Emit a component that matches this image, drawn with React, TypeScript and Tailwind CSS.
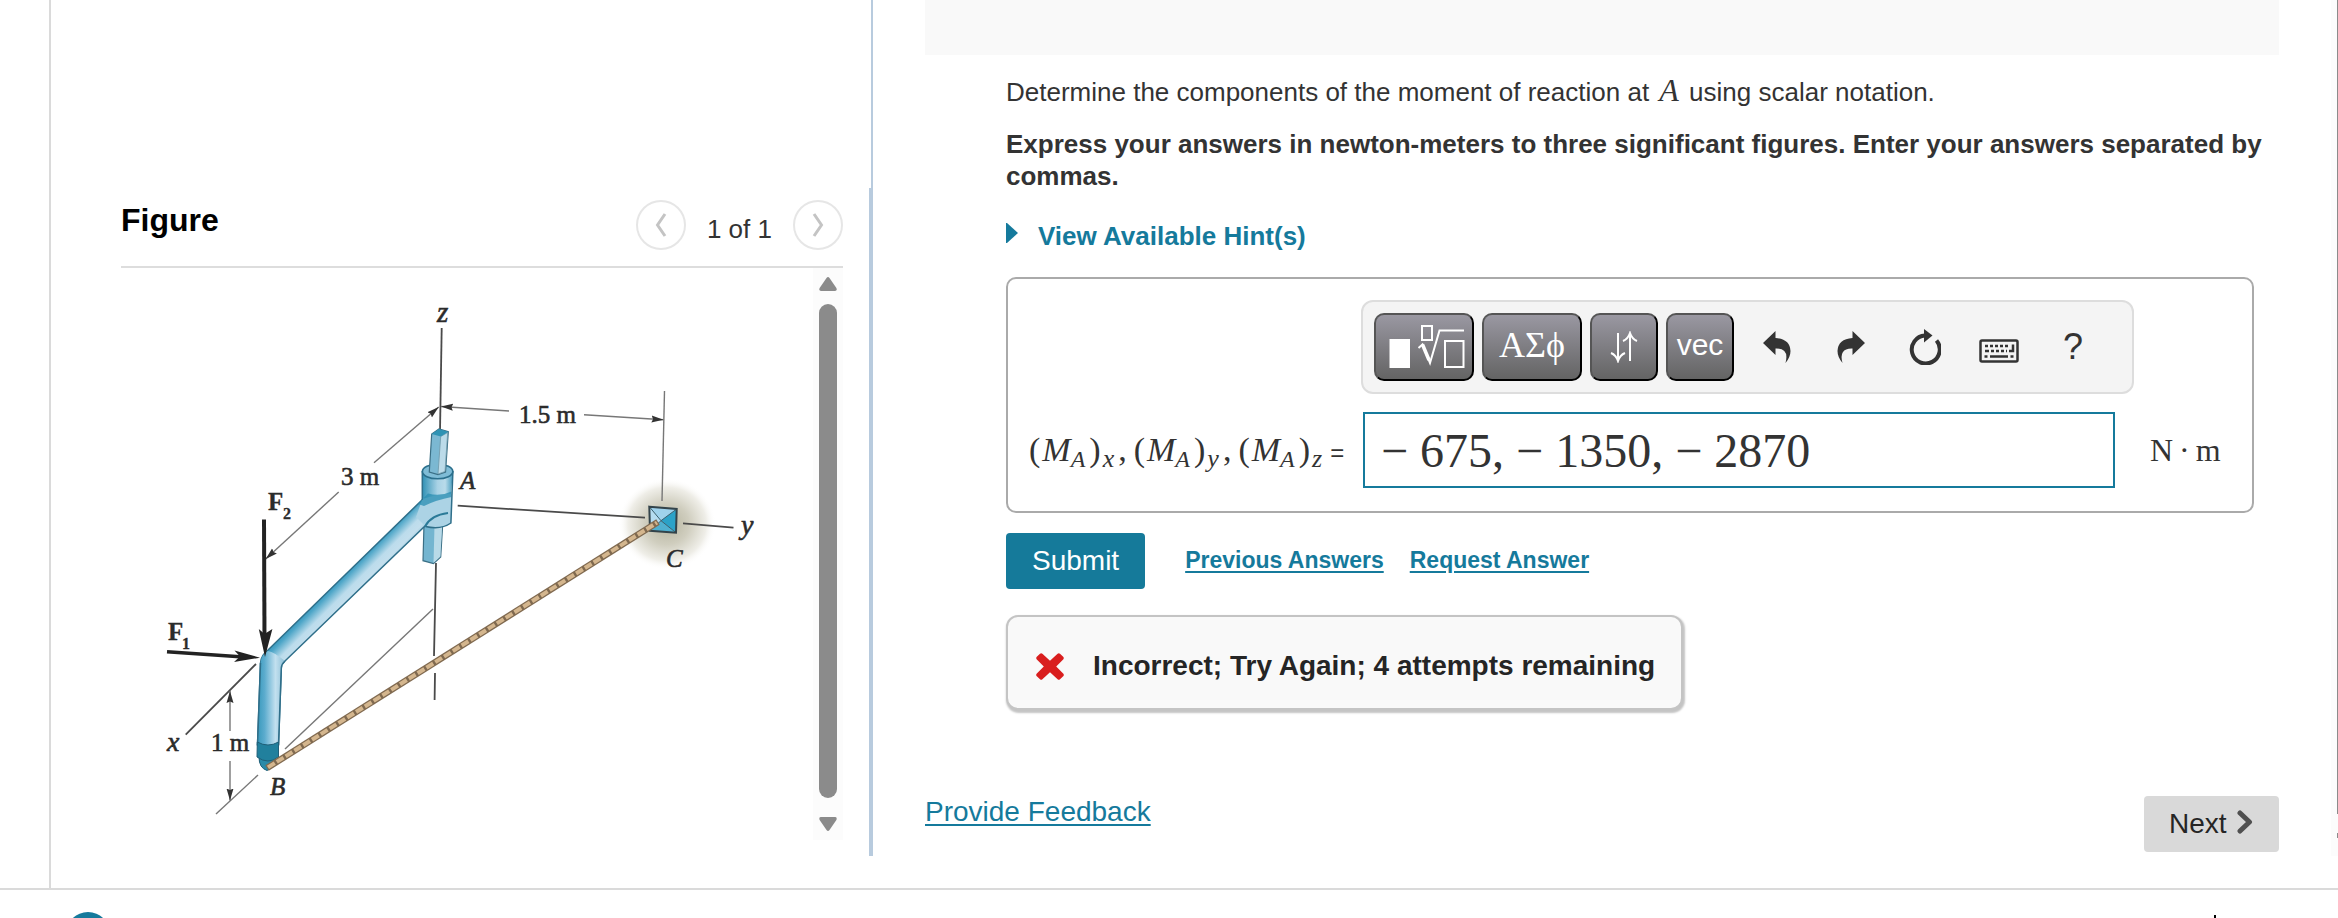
import type { ReactNode } from "react";

const SANS = "font-['Liberation_Sans',Arial,sans-serif]";
const SERIF = "font-['Liberation_Serif','Times_New_Roman',serif]";

function BracketDrawing() {
  return (
    <svg viewBox="121 268 692 572" className="block h-[572px] w-[692px] max-w-full" role="img" aria-label="Bracket supported at A with cable BC">
      <defs>
        <linearGradient id="arm" gradientUnits="userSpaceOnUse" x1="339" y1="577" x2="357" y2="595">
          <stop offset="0" stopColor="#2f93b8" />
          <stop offset="0.2" stopColor="#4ea6c8" />
          <stop offset="0.6" stopColor="#bcdcec" />
          <stop offset="0.85" stopColor="#c3dfed" />
          <stop offset="1" stopColor="#a5cde0" />
        </linearGradient>
        <linearGradient id="leg" x1="0" y1="0" x2="1" y2="0">
          <stop offset="0" stopColor="#3a9abd" />
          <stop offset="0.25" stopColor="#5cacce" />
          <stop offset="0.65" stopColor="#c2e0ef" />
          <stop offset="1" stopColor="#8cbfd6" />
        </linearGradient>
        <linearGradient id="collar" x1="0" y1="0" x2="1" y2="0">
          <stop offset="0" stopColor="#3292b6" />
          <stop offset="0.5" stopColor="#a9d2e5" />
          <stop offset="0.75" stopColor="#b9dbea" />
          <stop offset="1" stopColor="#4a9fc0" />
        </linearGradient>
        <radialGradient id="wall">
          <stop offset="0" stopColor="#b5b39d" />
          <stop offset="0.45" stopColor="#d0cebf" />
          <stop offset="0.8" stopColor="#efeee8" />
          <stop offset="1" stopColor="#ffffff" stopOpacity="0" />
        </radialGradient>
        <marker id="tip" viewBox="0 0 12 8" refX="12" refY="4" markerWidth="12" markerHeight="8" markerUnits="userSpaceOnUse" orient="auto">
          <path d="M0 0.5 L12 4 L0 7.5 L1.5 4 Z" fill="#333" />
        </marker>
      </defs>

      <ellipse cx="667" cy="524" rx="49" ry="46" fill="url(#wall)" />

      {/* Axes and reference lines */}
      <g fill="none" stroke="#4a4a4a" strokeWidth="1.8">
        <path d="M441.7 328 L440 432" />
        <path d="M436 563 L434 656 M435 673 L434.6 700" />
        <path d="M457.7 505.7 L645 517.7 M683 523.3 L733.5 527.7" />
        <path d="M256 664 L185.7 734.7" />
      </g>
      <g fill="none" stroke="#777" strokeWidth="1.4">
        <path d="M664.5 391 L662 501" />
        <path d="M433 609 L285 749" />
        <path d="M258 775 L216 814" />
        <path d="M374 462.7 L438.7 407" markerEnd="url(#tip)" />
        <path d="M338.7 492 L265.7 559" markerEnd="url(#tip)" />
        <path d="M509 411 L441 406.5" markerEnd="url(#tip)" />
        <path d="M584 414.7 L663.5 419.8" markerEnd="url(#tip)" />
        <path d="M230 731 L230 691" markerEnd="url(#tip)" />
        <path d="M230 761 L230 800.5" markerEnd="url(#tip)" />
      </g>

      {/* Square rod below the collar */}
      <path d="M424 524 L423 560.7 L433.5 563.5 L440.7 557 L442.7 524 Z" fill="#74b5d0" stroke="#3b6f85" strokeWidth="1.2" />
      <path d="M434.5 526 L433.5 563 L440.4 556.6 L442.2 526 Z" fill="#b9dae8" />

      {/* Arm and leg */}
      <path d="M422 500 L268 650 Q261 655 260.5 663 L257.5 745 L278.5 745 L281.3 668 Q281.5 664 285 661 L425 526 L440 508 Z" fill="url(#arm)" stroke="#2f6f8a" strokeWidth="1.5" />
      <path d="M260.8 661 L257.8 747 L278.3 747 L281 668 Q281.5 664 285 661 Q274 652 268 651 Q262 654 260.8 661 Z" fill="url(#leg)" />
      <path d="M260.5 663 L257.5 745 M278.5 745 L281.3 668 Q281.5 664 285 661" fill="none" stroke="#2f6f8a" strokeWidth="1.5" />
      <path d="M259 757 Q259 768 267 770.5 Q274 768 276 757 Z" fill="#2b8aa8" stroke="#1f5f78" />
      <path d="M257.3 742 Q268 748 278.5 742 L278.5 757 Q268 765 257 757 Z" fill="#21809d" stroke="#1f5f78" />

      {/* Collar at A, blending into the arm */}
      <path d="M422.5 471 L422.5 501 L440 499 L451 497 L452.7 471 Z" fill="url(#collar)" />
      <path d="M422.5 499 Q438 494 452 494 L451 523 Q441 530 425.5 526.5 L416 517 Z" fill="#acd3e5" />
      <path d="M428 493.5 Q440 497 451.5 491.5 L451.5 497 Q436 500 424 506 L418 504 Z" fill="#2a8db2" opacity="0.75" />
      <path d="M425 526.5 Q431 515 448 513" fill="none" stroke="#2b7a98" strokeWidth="2" />
      <path d="M422.3 471 L422.3 500 M452.9 471 L450.9 523 Q441 530 425.5 526.5" fill="none" stroke="#2f6f8a" strokeWidth="1.5" />
      <ellipse cx="437.6" cy="471.5" rx="15.2" ry="7.3" fill="#7fbcd6" stroke="#2b6f8c" strokeWidth="1.6" />

      {/* Square rod above the collar */}
      <path d="M431.7 434 L429.3 472 L438 474.5 L445.5 472 L448.3 431.7 L439 429 Z" fill="#7bb8d2" stroke="#3b6f85" strokeWidth="1.2" />
      <path d="M440.7 436.5 L438 474 L445 471.5 L447.7 432.5 Z" fill="#bcdbe9" stroke="#6f98a8" strokeWidth="0.8" />
      <path d="M431.7 434 L439 429 L448.3 431.7 L440.7 436.5 Z" fill="#2f93b4" />

      {/* Anchor plate at C */}
      <path d="M649.3 506.7 L676.7 509 L661 520.7 Z" fill="#9fd2ec" />
      <path d="M676.7 509 L676 532.7 L661 520.7 Z" fill="#2ba2c8" />
      <path d="M676 532.7 L650 530.7 L661 520.7 Z" fill="#4fb0d0" />
      <path d="M650 530.7 L649.3 506.7 L661 520.7 Z" fill="#b5dcf0" />
      <path d="M649.3 506.7 L661 520.7 L676 532.7 M676.7 509 L661 520.7 L650 530.7" fill="none" stroke="#3a6070" strokeWidth="1" />
      <path d="M649.3 506.7 L676.7 509 L676 532.7 L650 530.7 Z" fill="none" stroke="#33434a" strokeWidth="2" />

      {/* Cable */}
      <path d="M267 768 L658 522" stroke="#806a50" strokeWidth="6.5" />
      <path d="M268 767.4 L657 522.6" stroke="#d4b68e" strokeWidth="4" strokeDasharray="8 2.4" />

      {/* Forces */}
      <path d="M264 519.5 L264.5 638" stroke="#222" strokeWidth="4" />
      <path d="M265 657 L258.8 629 L264.5 634 L272.4 629 Z" fill="#222" />
      <path d="M167 651.8 L240 656.7" stroke="#222" strokeWidth="3.6" />
      <path d="M260 657.7 L234.5 650.5 L240 656.5 L234 662 Z" fill="#222" />

      <g className={SERIF} fontSize="25" fill="#2b2b2b" stroke="#2b2b2b" strokeWidth="0.6">
        <text x="341" y="485">3 m</text>
        <text x="519" y="423">1.5 m</text>
        <text x="211" y="751">1 m</text>
        <g fontStyle="italic">
          <text x="437" y="322" fontSize="29">z</text>
          <text x="460" y="489">A</text>
          <text x="741" y="534" fontSize="28">y</text>
          <text x="666" y="567">C</text>
          <text x="270" y="795">B</text>
          <text x="167" y="751" fontSize="28">x</text>
        </g>
        <g fontWeight="bold" strokeWidth="0.3">
          <text x="268" y="510">F</text>
          <text x="283" y="519" fontSize="16">2</text>
          <text x="168" y="640">F</text>
          <text x="182" y="649" fontSize="16">1</text>
        </g>
      </g>
    </svg>
  );
}

function FigureScrollbar() {
  return (
    <div className="flex w-[30px] shrink-0 flex-col items-center justify-between bg-[#fcfcfc] py-[9px]">
      <svg width="18" height="14" viewBox="0 0 18 14" fill="#8b8b8b">
        <path d="M7.5 1 Q9 -0.8 10.5 1 L17.4 11 Q18.4 14 16 14 L2 14 Q-0.4 14 0.6 11 Z" />
      </svg>
      <div className="my-[13px] w-[18px] flex-1 rounded-full bg-[#8b8b8b]" />
      <svg width="18" height="14" viewBox="0 0 18 14" fill="#8b8b8b" className="mt-[6px]">
        <path d="M7.5 13 Q9 14.8 10.5 13 L17.4 3 Q18.4 0 16 0 L2 0 Q-0.4 0 0.6 3 Z" />
      </svg>
    </div>
  );
}

function PagerButton({ label, d }: { label: string; d: string }) {
  return (
    <button type="button" aria-label={label} className="flex size-[50px] items-center justify-center rounded-full border-2 border-[#e6e6e6]">
      <svg width="14" height="24" viewBox="0 0 14 24" fill="none" stroke="#c4c4c4" strokeWidth="3">
        <path d={d} />
      </svg>
    </button>
  );
}

function KeyButton({ label, wide, children }: { label: string; wide?: boolean; children: ReactNode }) {
  return (
    <button
      type="button"
      aria-label={label}
      className={`flex h-[68px] items-center justify-center rounded-[10px] border-2 border-t-[#555] border-r-black border-b-black border-l-[#555] bg-linear-to-b from-[#9a98a2] to-[#646464] text-white ${wide ? "w-[100px]" : "w-[68px]"}`}
    >
      {children}
    </button>
  );
}

function ToolButton({ label, children }: { label: string; children: ReactNode }) {
  return (
    <button type="button" aria-label={label} className="flex h-[68px] w-[74px] items-center justify-center text-[#333]">
      {children}
    </button>
  );
}

function MathToolbar() {
  return (
    <div className="ml-[353px] flex w-fit items-center rounded-[12px] border-2 border-[#ddd] bg-[#f4f4f4] py-[11px] pr-[22px] pl-[11px]">
      <div className="flex gap-2">
        <KeyButton label="Templates" wide>
          <svg width="96" height="64" viewBox="2 2 96 64" fill="none" stroke="#fff" strokeWidth="2">
            <rect x="15.5" y="26" width="20.500" height="29" fill="#fff" stroke="none" />
            <rect x="48" y="13" width="10" height="14" />
            <path d="M44.500 35 L48.500 31.500 L56 50 L65.500 17.500 H90" />
            <path d="M48.500 31.500 L55 47" strokeWidth="3.500" />
            <rect x="71" y="28" width="18.500" height="26" />
          </svg>
        </KeyButton>
        <KeyButton label="Greek symbols" wide>
          <span className={`${SERIF} pb-1 text-4xl`}>ΑΣϕ</span>
        </KeyButton>
        <KeyButton label="Arrows">
          <svg width="30" height="32" viewBox="0 0 30 32" fill="none" stroke="#fff" strokeWidth="2">
            <path d="M9 2 V29 M2 22 Q7 24 9 30 Q11 24 16 22" />
            <path d="M21 30 V3 M14 10 Q19 8 21 2 Q23 8 28 10" />
          </svg>
        </KeyButton>
        <KeyButton label="Vector">
          <span className="pb-1 text-3xl">vec</span>
        </KeyButton>
      </div>
      <div className="ml-[6px] flex">
        <ToolButton label="Undo">
          <svg width="28" height="32" viewBox="0 0 28 32" fill="currentColor">
            <path d="M0 12 L12.500 0 V7 Q27 8 27.500 20 Q27.500 26 22.500 32 Q26.500 17 12.500 17.500 V24 Z" />
          </svg>
        </ToolButton>
        <ToolButton label="Redo">
          <svg width="28" height="32" viewBox="0 0 28 32" fill="currentColor">
            <path d="M28 12 L15.500 0 V7 Q1 8 0.500 20 Q0.500 26 5.500 32 Q1.500 17 15.500 17.500 V24 Z" />
          </svg>
        </ToolButton>
        <ToolButton label="Reset">
          <svg width="32" height="36" viewBox="0 0 32 36" fill="none" stroke="currentColor" strokeWidth="4">
            <path d="M27.500 11.500 A14 14 0 1 1 16 6.500" />
            <path d="M15 0 L23.500 6.500 L15 13.500 Z" fill="currentColor" stroke="none" />
          </svg>
        </ToolButton>
        <ToolButton label="Keyboard">
          <svg width="40" height="24" viewBox="0 0 40 24" fill="none" stroke="currentColor" strokeWidth="2.500" className="mt-2">
            <rect x="1.500" y="1.500" width="37" height="21" rx="1.500" />
            <path d="M6 7 H30" strokeDasharray="3 2" />
            <path d="M6 12 H28" strokeDasharray="4 2 3 2 3 2 3 2" />
            <path d="M34 5.500 V12 H30" />
            <path d="M5.500 17.500 H8.500 M11 17.500 H29 M31.500 17.500 H34.500" />
          </svg>
        </ToolButton>
        <ToolButton label="Help">
          <span className="text-4xl">?</span>
        </ToolButton>
      </div>
    </div>
  );
}

function Moment({ axis }: { axis: string }) {
  return (
    <span className="flex items-baseline">
      <span className="mr-[2px]">(</span>
      <i>M</i>
      <i className="relative top-[6px] mr-1 text-2xl leading-none">A</i>
      <span>)</span>
      <i className="relative top-[6px] ml-[2px] text-[26px] leading-none">{axis}</i>
    </span>
  );
}

function AnswerBox() {
  return (
    <div className="mt-[25px] mr-[25px] rounded-[10px] border-2 border-[#aaa] pt-[21px] pb-[23px]">
      <MathToolbar />
      <div className="mt-[18px] flex items-center">
        <label htmlFor="answer" className={`${SERIF} flex w-[355px] shrink-0 items-baseline pl-[21px] text-[34px] leading-10`}>
          <Moment axis="x" />
          <span className="mr-[7px] ml-1">,</span>
          <Moment axis="y" />
          <span className="mr-[7px] ml-1">,</span>
          <Moment axis="z" />
          <span className={`${SANS} ml-2 text-2xl leading-none`}>=</span>
        </label>
        <input
          id="answer"
          type="text"
          defaultValue="− 675, − 1350, − 2870"
          className={`${SERIF} h-[76px] min-w-0 flex-1 border-2 border-[#157a9c] bg-white px-4 text-5xl text-[#333] outline-none`}
        />
        <span className={`${SERIF} w-[137px] shrink-0 pl-[35px] text-[32px] leading-10`}>
          N<span className="px-[6px]">·</span>m
        </span>
      </div>
    </div>
  );
}

function FigurePanel() {
  return (
    <aside className="flex border-l-2 border-[#dadada]">
      <div className="min-w-0 flex-1 pt-[200px] pr-[26px] pb-4 pl-[70px]">
        <div className="flex items-start justify-between border-b-2 border-[#ddd] pb-4">
          <h2 className="text-[32px] leading-10 font-bold text-black">Figure</h2>
          <div className="flex items-center">
            <PagerButton label="Previous figure" d="M11 1 L3.500 12 L11 23" />
            <span className="mx-[21px] pt-2 text-[26px] leading-8">1 of 1</span>
            <PagerButton label="Next figure" d="M3 1 L10.500 12 L3 23" />
          </div>
        </div>
        <div className="flex justify-between">
          <BracketDrawing />
          <FigureScrollbar />
        </div>
      </div>
      <div className="mb-8 flex w-1 flex-col items-end">
        <div className="h-[188px] w-[2px] bg-[#b8cbde]" />
        <div className="w-1 flex-1 bg-[#b8cbde]" />
      </div>
    </aside>
  );
}

function QuestionPanel() {
  return (
    <main className="flex">
      <div className="min-w-0 flex-1 px-[52px] pb-9">
        <div className="h-[55px] bg-[#f9f9f9]" />
        <div className="pl-[81px]">
          <p className="mt-[21px] text-[26px] leading-8">
            Determine the components of the moment of reaction at <i className={`${SERIF} mx-[3px] text-[32px] leading-7`}>A</i> using scalar notation.
          </p>
          <p className="mt-5 text-[26px] leading-8 font-bold">
            Express your answers in newton-meters to three significant figures. Enter your answers separated by commas.
          </p>
          <button type="button" className="mt-7 flex items-start text-[26px] leading-8 font-bold text-[#157a9c]">
            <svg width="12" height="20" viewBox="0 0 12 20" fill="currentColor" className="mt-[3px] mr-5">
              <path d="M0 0 H1 L12 10 L1 20 H0 Z" />
            </svg>
            View Available Hint(s)
          </button>

          <AnswerBox />

          <div className="mt-5 flex items-center">
            <button type="button" className="h-14 rounded-[4px] bg-[#157a9a] px-[26px] pb-px text-[28px] text-white">
              Submit
            </button>
            <div className="ml-10 flex gap-[26px] pb-[2px] text-[23px] leading-7 font-bold text-[#157a9c]">
              <a href="#previous" className="underline decoration-2 underline-offset-[3px]">Previous Answers</a>
              <a href="#request" className="underline decoration-2 underline-offset-[3px]">Request Answer</a>
            </div>
          </div>

          <div className="mt-[26px] flex w-fit items-center rounded-[12px] border-2 border-[#c4c4c4] bg-[#f9f9f9] pt-[33px] pr-[26px] pb-[26px] pl-7 shadow-[1px_2px_2px_1px_#c4c4c4]">
            <svg width="28" height="27" viewBox="0 0 28 27" fill="#d91e1e">
              <path d="M0.600 6.200 Q-0.300 5 0.800 3.800 L4 0.700 Q5.200 -0.300 6.400 0.700 L14 7.800 L21.600 0.700 Q22.800 -0.300 24 0.700 L27.200 3.800 Q28.300 5 27.400 6.200 L20.200 13.500 L27.400 20.800 Q28.300 22 27.200 23.200 L24 26.300 Q22.800 27.300 21.600 26.300 L14 19.200 L6.400 26.300 Q5.200 27.300 4 26.300 L0.800 23.200 Q-0.300 22 0.600 20.800 L7.800 13.500 Z" />
            </svg>
            <strong className="ml-[29px] text-[28px] leading-8 text-[#252525]">Incorrect; Try Again; 4 attempts remaining</strong>
          </div>
        </div>

        <div className="mt-[86px] flex items-start justify-between">
          <a href="#feedback" className="text-[28px] leading-8 text-[#157a9c] underline decoration-2 underline-offset-[3px]">Provide Feedback</a>
          <button type="button" className="flex h-14 w-[135px] items-center rounded-[4px] bg-[#d9d9d9] pl-[25px] text-[28px] text-[#252525]">
            Next
            <svg width="16" height="24" viewBox="0 0 16 24" fill="none" stroke="#505050" strokeWidth="5" strokeLinecap="round" strokeLinejoin="round" className="mb-1 ml-[10px]">
              <path d="M3 3 L12.500 12 L3 21" />
            </svg>
          </button>
        </div>
      </div>

      {/* Page scrollbar, cut off by the window's edge */}
      <div className="mb-8 flex w-[7px] flex-col items-end bg-[#fcfcfc] pb-[18px]">
        <div className="w-px flex-1 bg-[#8b8b8b]" />
        <div className="mt-[19px] h-[5px] w-px bg-[#8b8b8b]" />
      </div>
    </main>
  );
}

export default function App() {
  return (
    <div className={`${SANS} min-h-screen bg-white text-[#333]`}>
      <div className="grid grid-cols-[824fr_1465fr] border-b-2 border-[#dadada] pl-[49px]">
        <FigurePanel />
        <QuestionPanel />
      </div>
      <footer className="flex h-7 items-start justify-between overflow-hidden pr-[122px] pl-[66px]">
        <div className="mt-[22px] size-11 shrink-0 rounded-full bg-[#157a9c]" />
        <div className="mt-[25px] h-4 w-[2px] bg-black" />
      </footer>
    </div>
  );
}
